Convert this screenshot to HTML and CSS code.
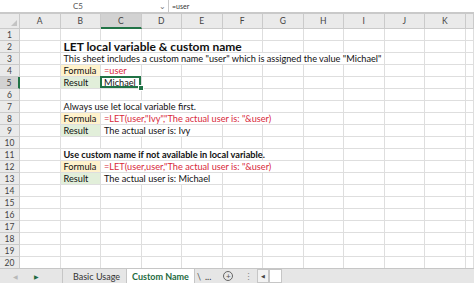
FILE: index.html
```html
<!DOCTYPE html>
<html lang="en">
<head>
  <meta charset="UTF-8" />
  <meta name="viewport" content="width=device-width, initial-scale=1.0" />
  <title>LET local variable &amp; custom name</title>
  <link rel="stylesheet" href="styles.css">
</head>
<body>
  <div class="formula-bar">
    <div class="name-box">C5</div>
    <div class="name-arrow">&#8964;</div>
    <div class="fx-input">=user</div>
  </div>
  <div class="sheet" id="sheet"></div>
  <footer class="tabs">
    <span class="nav prev">&#9664;</span>
    <span class="nav next">&#9654;</span>
    <span class="tab">Basic Usage</span>
    <span class="tab active">Custom Name</span>
    <span class="tab cut">\</span>
    <span class="more">...</span>
    <span class="add">+</span>
    <span class="grip">&#8942;</span>
    <span class="scroll-btn">&#9664;</span>
    <span class="scroll-thumb"></span>
  </footer>
  <script>
    const cols = ["A", "B", "C", "D", "E", "F", "G", "H", "I", "J", "K", ""];
    // row -> list of [column index (A = 0), span, text, class]
    const cells = {
      2: [[1, 5, "LET local variable & custom name", "title"]],
      3: [[1, 8, "This sheet includes a custom name \"user\" which is assigned the value \"Michael\"", ""]],
      4: [[1, 1, "Formula", "label-f"], [2, 1, "=user", "formula"]],
      5: [[1, 1, "Result", "label-r"], [2, 1, "Michael", "selected"]],
      7: [[1, 4, "Always use let local variable first.", ""]],
      8: [[1, 1, "Formula", "label-f"], [2, 5, "=LET(user,\"Ivy\",\"The actual user is: \"&user)", "formula"]],
      9: [[1, 1, "Result", "label-r"], [2, 3, "The actual user is: Ivy", ""]],
      11: [[1, 5, "Use custom name if not available in local variable.", "bold"]],
      12: [[1, 1, "Formula", "label-f"], [2, 5, "=LET(user,user,\"The actual user is: \"&user)", "formula"]],
      13: [[1, 1, "Result", "label-r"], [2, 3, "The actual user is: Michael", ""]]
    };
    const sheet = document.getElementById("sheet");
    function add(cls, text) {
      const d = document.createElement("div");
      d.className = cls;
      d.textContent = text || "";
      sheet.appendChild(d);
      return d;
    }
    add("corner");
    cols.forEach(function (c) {
      add("col-head" + (c === "C" ? " active" : ""), c);
    });
    for (let r = 1; r <= 20; r++) {
      add("row-head" + (r === 5 ? " active" : ""), r);
      const list = cells[r] || [];
      let c = 0;
      while (c < cols.length) {
        const hit = list.find(function (x) { return x[0] === c; });
        if (hit) {
          const el = add("cell " + hit[3], hit[2]);
          if (hit[1] > 1) el.style.gridColumn = "span " + hit[1];
          c += hit[1];
        } else {
          add("cell");
          c++;
        }
      }
    }
  </script>
</body>
</html>
```

FILE: styles.css
```css
body {
  margin: 0;
  width: 474px;
  height: 283px;
  overflow: hidden;
  font-family: Lato, "Open Sans", sans-serif;
  background: #fff;
  color: #111;
  display: flex;
  flex-direction: column;
}
.formula-bar {
  height: 12px;
  flex: none;
  display: flex;
  align-items: center;
  border-bottom: 2px solid #c9c9c9;
  font-size: 8px;
  color: #555;
}
.name-box {
  width: 156px;
  text-align: center;
}
.name-arrow {
  width: 12px;
  text-align: center;
  font-size: 8px;
  line-height: 6px;
  color: #777;
}
.fx-input {
  border-left: 1px solid #c9c9c9;
  height: 12px;
  line-height: 12px;
  padding-left: 3px;
  color: #333;
  font-size: 7px;
}
.sheet {
  display: grid;
  grid-template-columns: 20px repeat(11, 40.5px) 1fr;
  grid-template-rows: 15px;
  grid-auto-rows: 12px;
  flex: 1;
  overflow: hidden;
}
.corner,
.col-head,
.row-head {
  background: #eaeaea;
  color: #444;
  font-size: 8.5px;
  box-sizing: border-box;
  border-right: 1px solid #cacaca;
  border-bottom: 1px solid #cacaca;
  display: flex;
  align-items: center;
  justify-content: center;
}
.corner {
  position: relative;
}
.corner::after {
  content: "";
  position: absolute;
  right: 2px;
  bottom: 2px;
  border-left: 6px solid transparent;
  border-bottom: 6px solid #c4c4c4;
}
.col-head.active {
  background: #d2d2d2;
  border-bottom: 2px solid #217346;
}
.row-head.active {
  background: #d2d2d2;
  border-right: 2px solid #217346;
}
.cell {
  box-sizing: border-box;
  border-right: 1px solid #dedede;
  border-bottom: 1px solid #dedede;
  font-size: 9.2px;
  line-height: 12px;
  padding-left: 3px;
  white-space: nowrap;
  overflow: visible;
}
.title {
  font-weight: bold;
  font-size: 12px;
  line-height: 12px;
}
.bold {
  font-weight: bold;
}
.label-f {
  background: #fff2cc;
}
.label-r {
  background: #e2efda;
}
.formula {
  color: #d8283a;
}
.selected {
  position: relative;
}
.selected::before {
  content: "";
  position: absolute;
  left: -1px;
  top: -1px;
  right: 0;
  bottom: 0;
  border: 2px solid #217346;
}
.selected::after {
  content: "";
  position: absolute;
  right: -3px;
  bottom: -3px;
  width: 4px;
  height: 4px;
  background: #217346;
  border: 1px solid #fff;
}
.tabs {
  height: 14px;
  flex: none;
  background: #e6e6e6;
  border-top: 1px solid #c6c6c6;
  display: flex;
  align-items: stretch;
  font-size: 9px;
  color: #333;
}
.nav {
  font-size: 6px;
  display: flex;
  align-items: center;
  justify-content: center;
  width: 20px;
}
.prev {
  color: #b8b8b8;
  margin-left: 5px;
}
.next {
  color: #1e6b41;
  border-right: 1px solid #c6c6c6;
  width: 22px;
  padding-right: 15px;
}
.tab {
  display: flex;
  align-items: center;
  padding: 0 6px 0 10px;
  border-right: 1px solid #c6c6c6;
}
.tab.active {
  background: #fff;
  color: #1e6b41;
  font-weight: bold;
  padding: 0 5px;
}
.tab.cut {
  padding: 0 1px 0 2px;
  border-right: none;
  color: #555;
}
.more {
  display: flex;
  align-items: center;
  padding: 0 3px;
}
.add {
  width: 8px;
  height: 8px;
  margin: auto 6px auto 9px;
  border: 1px solid #666;
  border-radius: 50%;
  font-size: 8px;
  line-height: 8px;
  text-align: center;
  color: #555;
}
.grip {
  display: flex;
  align-items: center;
  margin-left: 5px;
  color: #888;
}
.scroll-btn {
  margin-left: 4px;
  width: 10px;
  font-size: 5px;
  display: flex;
  align-items: center;
  justify-content: center;
  color: #444;
  border: 1px solid #c6c6c6;
  background: #f2f2f2;
}
.scroll-thumb {
  width: 11px;
  background: #fff;
  border: 1px solid #c6c6c6;
}
```
